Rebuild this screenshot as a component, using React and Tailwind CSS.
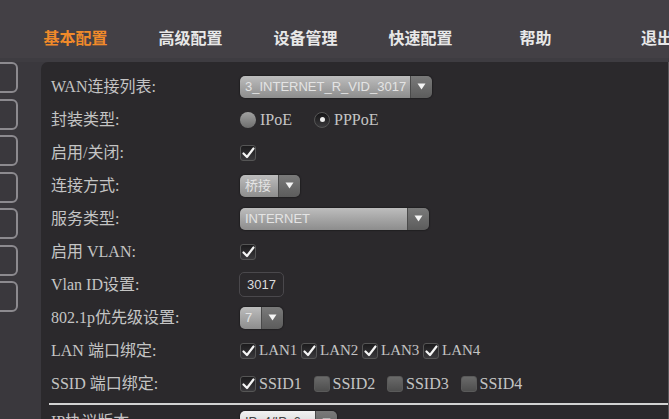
import React from 'react';

const serif = { fontFamily: '"Liberation Serif", "Noto Sans CJK SC", serif' };

const navItems = ['基本配置', '高级配置', '设备管理', '快速配置', '帮助', '退出'];

function Arrow() {
  return (
    <svg width="9" height="7" viewBox="0 0 9 7">
      <path d="M0.5 0.5 L8.5 0.5 L4.5 6.5 Z" fill="#f4f4f4" />
    </svg>
  );
}

function Select({ value, width, light }) {
  return (
    <div
      className="flex h-[22px] rounded-[5px] overflow-hidden shadow-[0_0_2px_rgba(0,0,0,0.8)]"
      style={{ width }}
    >
      <div
        className={`flex-1 flex items-center pl-[5px] text-[13px] whitespace-nowrap overflow-hidden font-['Liberation_Sans','Noto_Sans_CJK_SC',sans-serif] ${
          light
            ? 'bg-gradient-to-b from-[#f2f2f2] to-[#c9c9c9] text-[#444]'
            : 'bg-gradient-to-b from-[#bdbdbd] to-[#8d8d8d] text-[#e4e4e4]'
        }`}
      >
        {value}
      </div>
      <div className="w-[22px] flex items-center justify-center bg-gradient-to-b from-[#7a7a7a] to-[#5c5c5c] border-l border-[#4a4a4a]">
        <Arrow />
      </div>
    </div>
  );
}

function Check({ checked }) {
  return (
    <div
      className={`w-[16px] h-[16px] rounded-[3px] flex items-center justify-center shrink-0 ${
        checked
          ? 'bg-gradient-to-b from-[#1c1b1d] to-[#3a393c] border border-[#555]'
          : 'bg-gradient-to-b from-[#6a6a6a] to-[#4e4e4e] border border-[#5a5a5a]'
      }`}
    >
      {checked && (
        <svg width="13" height="12" viewBox="0 0 13 12">
          <path d="M1.5 6.5 L5 10 L11.5 1.5" stroke="#f5f5f5" strokeWidth="2.2" fill="none" strokeLinecap="round" strokeLinejoin="round" />
        </svg>
      )}
    </div>
  );
}

function Radio({ checked }) {
  return checked ? (
    <div className="w-[16px] h-[16px] rounded-full bg-gradient-to-b from-[#151416] to-[#3b3a3d] border border-[#555] flex items-center justify-center">
      <div className="w-[5px] h-[5px] rounded-full bg-[#eee]" />
    </div>
  ) : (
    <div className="w-[16px] h-[16px] rounded-full bg-gradient-to-b from-[#a2a2a2] to-[#6e6e6e]" />
  );
}

function Row({ label, children }) {
  return (
    <div className="flex items-center h-[33px]">
      <div className="w-[189px] text-[16px] text-[#c4c4c4] whitespace-nowrap" style={serif}>{label}</div>
      <div className="flex items-center">{children}</div>
    </div>
  );
}

export default function App() {
  return (
    <div className="w-[669px] h-[419px] overflow-hidden bg-[#3a383d] flex flex-col">
      <div className="h-[58px] bg-[#434045] flex items-end pb-[9px] pl-[18px] shrink-0">
        {navItems.map((item, i) => (
          <div
            key={item}
            className={`shrink-0 text-[16px] font-bold whitespace-nowrap font-['Noto_Sans_CJK_SC',sans-serif] ${
              i === 0 ? 'text-[#f08a2a]' : 'text-[#e8e8e8]'
            } ${i === 5 ? 'w-[60px] ml-[48px] text-left' : 'w-[115px] text-center'}`}
          >
            {item}
          </div>
        ))}
      </div>
      <div className="h-[4px] bg-[#3e3c41] shrink-0" />
      <div className="flex flex-1">
        <div className="w-[41px] shrink-0 flex flex-col gap-[5.5px]">
          {[0, 1, 2, 3, 4, 5, 6].map((n) => (
            <div
              key={n}
              className="w-[21px] h-[31px] ml-[-3px] rounded-r-[6px] border-2 border-[#8c8a8f] bg-[#3a383d]"
            />
          ))}
        </div>
        <div className="flex-1 bg-[#2b292c] rounded-tl-[7px] border-r border-[#5a585c] pt-[8px] pl-[10px]">
          <Row label="WAN连接列表:">
            <Select value="3_INTERNET_R_VID_3017" width={192} />
          </Row>
          <Row label="封装类型:">
            <Radio />
            <span className="ml-[4px] text-[16px] text-[#c4c4c4]" style={serif}>IPoE</span>
            <div className="ml-[22px]"><Radio checked /></div>
            <span className="ml-[4px] text-[16px] text-[#c4c4c4]" style={serif}>PPPoE</span>
          </Row>
          <Row label="启用/关闭:">
            <Check checked />
          </Row>
          <Row label="连接方式:">
            <Select value="桥接" width={60} />
          </Row>
          <Row label="服务类型:">
            <Select value="INTERNET" width={189} />
          </Row>
          <Row label="启用 VLAN:">
            <Check checked />
          </Row>
          <Row label="Vlan ID设置:">
            <div className="w-[45px] h-[25px] ml-[-1px] rounded-[5px] border border-[#4a484c] bg-[#2b292c] flex items-center justify-center text-[13px] text-[#dcdcdc] font-['Liberation_Sans',sans-serif]">
              3017
            </div>
          </Row>
          <Row label="802.1p优先级设置:">
            <Select value="7" width={43} />
          </Row>
          <Row label="LAN 端口绑定:">
            {['LAN1', 'LAN2', 'LAN3', 'LAN4'].map((l) => (
              <div key={l} className="flex items-center w-[61px] shrink-0">
                <Check checked />
                <span className="ml-[3px] text-[15px] text-[#c4c4c4]" style={serif}>{l}</span>
              </div>
            ))}
          </Row>
          <Row label="SSID 端口绑定:">
            {['SSID1', 'SSID2', 'SSID3', 'SSID4'].map((l, i) => (
              <div key={l} className="flex items-center w-[73.5px] shrink-0">
                <Check checked={i === 0} />
                <span className="ml-[3px] text-[16px] text-[#c4c4c4]" style={serif}>{l}</span>
              </div>
            ))}
          </Row>
          <div className="h-[2px] bg-[#d2d2d2] ml-[-2px] mt-[3px]" />
          <Row label="IP协议版本:">
            <Select value="IPv4/IPv6" width={97} light />
          </Row>
        </div>
      </div>
    </div>
  );
}
